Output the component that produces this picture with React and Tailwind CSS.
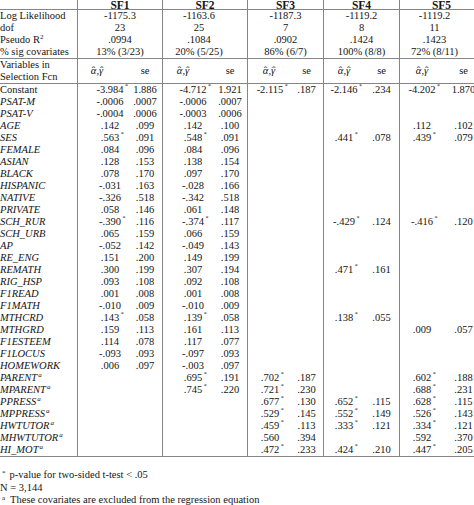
import React from "react";

const groups = [
  { w: "w-[85px]", a: "w-[50px]", se: "w-[35px]", aPad: "pl-[14px]", hPad: "pr-[12px]", topPad: "" },
  { w: "w-[85px]", a: "w-[50px]", se: "w-[35px]", aPad: "pl-[10px]", hPad: "pr-[10px]", topPad: "pr-[12px]" },
  { w: "w-[76px]", a: "w-[42px]", se: "w-[34px]", aPad: "pl-[2px]", hPad: "", topPad: "" },
  { w: "w-[76px]", a: "w-[40px]", se: "w-[36px]", aPad: "", hPad: "", topPad: "" },
  { w: "w-[84px]", a: "w-[44px]", se: "w-[40px]", aPad: "", hPad: "", topPad: "pr-[14px]" },
];

const summary = [
  { label: "Log Likelihood", vals: ["-1175.3", "-1163.6", "-1187.3", "-1119.2", "-1119.2"] },
  { label: "dof", vals: ["23", "25", "7", "8", "11"] },
  { label: "Pseudo R", sup: "2", vals: [".0994", ".1084", ".0902", ".1424", ".1423"] },
  { label: "% sig covariates", vals: ["13% (3/23)", "20% (5/25)", "86% (6/7)", "100% (8/8)", "72% (8/11)"] },
];

const E = ["", ""];

// label, italic, excluded(a), then [alpha, se] per model
const rows = [
  ["Constant", false, false, ["-3.984*", "1.886"], ["-4.712*", "1.921"], ["-2.115*", ".187"], ["-2.146*", ".234"], ["-4.202*", "1.870"]],
  ["PSAT-M", true, false, ["-.0006", ".0007"], ["-.0006", ".0007"], E, E, E],
  ["PSAT-V", true, false, ["-.0004", ".0006"], ["-.0003", ".0006"], E, E, E],
  ["AGE", true, false, [".142", ".099"], [".142", ".100"], E, E, [".112", ".102"]],
  ["SES", true, false, [".563*", ".091"], [".548*", ".091"], E, [".441*", ".078"], [".439*", ".079"]],
  ["FEMALE", true, false, [".084", ".096"], [".084", ".096"], E, E, E],
  ["ASIAN", true, false, [".128", ".153"], [".138", ".154"], E, E, E],
  ["BLACK", true, false, [".078", ".170"], [".097", ".170"], E, E, E],
  ["HISPANIC", true, false, ["-.031", ".163"], ["-.028", ".166"], E, E, E],
  ["NATIVE", true, false, ["-.326", ".518"], ["-.342", ".518"], E, E, E],
  ["PRIVATE", true, false, [".058", ".146"], [".061", ".148"], E, E, E],
  ["SCH_RUR", true, false, ["-.390*", ".116"], ["-.374*", ".117"], E, ["-.429*", ".124"], ["-.416*", ".120"]],
  ["SCH_URB", true, false, [".065", ".159"], [".066", ".159"], E, E, E],
  ["AP", true, false, ["-.052", ".142"], ["-.049", ".143"], E, E, E],
  ["RE_ENG", true, false, [".151", ".200"], [".149", ".199"], E, E, E],
  ["REMATH", true, false, [".300", ".199"], [".307", ".194"], E, [".471*", ".161"], E],
  ["RIG_HSP", true, false, [".093", ".108"], [".092", ".108"], E, E, E],
  ["F1READ", true, false, [".001", ".008"], [".001", ".008"], E, E, E],
  ["F1MATH", true, false, ["-.010", ".009"], ["-.010", ".009"], E, E, E],
  ["MTHCRD", true, false, [".143*", ".058"], [".139*", ".058"], E, [".138*", ".055"], E],
  ["MTHGRD", true, false, [".159", ".113"], [".161", ".113"], E, E, [".009", ".057"]],
  ["F1ESTEEM", true, false, [".114", ".078"], [".117", ".077"], E, E, E],
  ["F1LOCUS", true, false, ["-.093", ".093"], ["-.097", ".093"], E, E, E],
  ["HOMEWORK", true, false, [".006", ".097"], ["-.003", ".097"], E, E, E],
  ["PARENT", true, true, E, [".695*", ".191"], [".702*", ".187"], E, [".602*", ".188"]],
  ["MPARENT", true, true, E, [".745*", ".220"], [".721*", ".230"], E, [".688*", ".231"]],
  ["PPRESS", true, true, E, E, [".677*", ".130"], [".652*", ".115"], [".628*", ".115"]],
  ["MPPRESS", true, true, E, E, [".529*", ".145"], [".552*", ".149"], [".526*", ".143"]],
  ["HWTUTOR", true, true, E, E, [".459*", ".113"], [".333*", ".121"], [".334*", ".121"]],
  ["MHWTUTOR", true, true, E, E, [".560", ".394"], E, [".592", ".370"]],
  ["HI_MOT", true, true, E, E, [".472*", ".233"], [".424*", ".210"], [".447*", ".205"]],
];

const line = "border-[#858585]";

const Val = ({ v }) => {
  if (!v) return null;
  const star = v.endsWith("*");
  const num = star ? v.slice(0, -1) : v;
  return (
    <span className="relative">
      {num}
      {star && (
        <span className="absolute left-full top-[-1px] pl-[1.5px] text-[6px] leading-none">*</span>
      )}
    </span>
  );
};

const Hat = ({ ch }) => (
  <span className="relative">
    {ch}
    <span className="absolute left-[1px] top-[0px] not-italic">ˆ</span>
  </span>
);

export default function App() {
  return (
    <div className="w-[474px] h-[505px] overflow-hidden bg-white text-[#151515] text-[10.5px] font-['Liberation_Serif',serif]">
      <div className="w-[484px]">
        {/* model header */}
        <div className={`flex h-[10px] border-b ${line}`}>
          <div className={`w-[78px] border-r ${line}`} />
          {groups.map((g, i) => (
            <div key={i} className={`${g.w} border-r ${line} text-center font-bold text-[11.5px] leading-[10px]`}>
              SF{i + 1}
            </div>
          ))}
        </div>

        {/* fit stats */}
        {summary.map((r, ri) => (
          <div
            key={r.label}
            className={`flex leading-[12px] ${ri === summary.length - 1 ? `h-[13px] border-b ${line}` : "h-[12px]"}`}
          >
            <div className={`w-[78px] border-r ${line} whitespace-nowrap`}>
              {r.label}
              {r.sup && <span className="relative top-[-4px] text-[7px]">{r.sup}</span>}
            </div>
            {r.vals.map((v, i) => (
              <div key={i} className={`${groups[i].w} border-r ${line} text-center whitespace-nowrap ${groups[i].topPad}`}>
                {v}
              </div>
            ))}
          </div>
        ))}

        {/* column captions */}
        <div className={`flex h-[25px] border-b ${line} leading-[12px]`}>
          <div className={`w-[78px] border-r ${line}`}>
            Variables in
            <br />
            Selection Fcn
          </div>
          {groups.map((g, i) => (
            <React.Fragment key={i}>
              <div className={`${g.a} flex items-center justify-center italic ${g.hPad}`}>
                <Hat ch="α" />,<Hat ch="γ" />
              </div>
              <div className={`${g.se} border-r ${line} flex items-center justify-center`}>se</div>
            </React.Fragment>
          ))}
        </div>

        {/* coefficients */}
        {rows.map((r, ri) => {
          const [label, it, ex, ...vals] = r;
          return (
            <div
              key={label}
              className={`flex leading-[12px] ${ri === rows.length - 1 ? `h-[13px] border-b ${line}` : "h-[12px]"}`}
            >
              <div className={`w-[78px] border-r ${line} whitespace-nowrap ${it ? "italic" : ""}`}>
                {label}
                {ex && <span className="relative top-[-4px] text-[7px] pl-[1px]">a</span>}
              </div>
              {vals.map((pair, i) => (
                <React.Fragment key={i}>
                  <div className={`${groups[i].a} text-center whitespace-nowrap ${groups[i].aPad}`}>
                    <Val v={pair[0]} />
                  </div>
                  <div className={`${groups[i].se} border-r ${line} text-center whitespace-nowrap`}>
                    <Val v={pair[1]} />
                  </div>
                </React.Fragment>
              ))}
            </div>
          );
        })}
      </div>

      <div className="mt-[12px] leading-[12px] whitespace-nowrap">
        <div>
          <span className="relative top-[-3px] pl-[2px] pr-[4px] text-[7px]">*</span>p-value for two-sided t-test &lt; .05
        </div>
        <div>N = 3,144</div>
        <div>
          <span className="relative top-[-3px] pl-[2px] pr-[5px] text-[7px]">a</span>These covariates are excluded from the regression equation
        </div>
      </div>
    </div>
  );
}
